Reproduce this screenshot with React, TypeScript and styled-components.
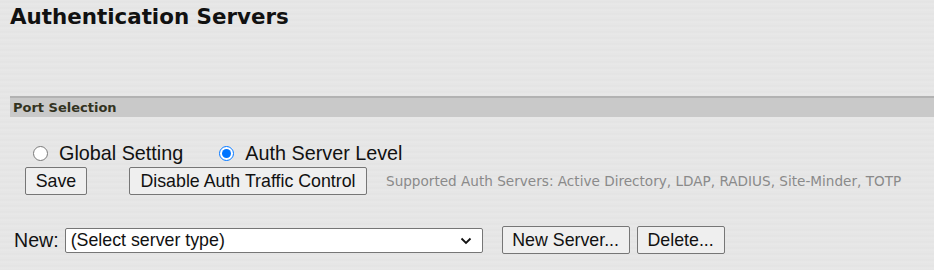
import React, { useState } from "react"
import styled, { createGlobalStyle } from "styled-components"

const GlobalStyle = createGlobalStyle`
  html, body {
    margin: 0;
    padding: 0;
    background: #e6e6e6;
  }
  body {
    font-family: "Liberation Sans", Arial, sans-serif;
  }
`

const Page = styled.div`
  width: 934px;
  height: 270px;
  overflow: hidden;
  background: repeating-linear-gradient(
    180deg,
    #e7e7e7 0px,
    #e3e3e3 2px,
    #e8e8e8 4px,
    #e5e5e5 6px
  );
`

const Title = styled.h1`
  margin: 0;
  padding: 4px 0 0 10px;
  height: 96px;
  box-sizing: border-box;
  font-family: "DejaVu Sans", Verdana, sans-serif;
  font-size: 21.4px;
  line-height: 26px;
  font-weight: bold;
  color: #111;
`

const SectionBar = styled.div`
  margin-left: 10px;
  height: 21px;
  box-sizing: border-box;
  border-top: 2px solid #b2b2b2;
  background: #c9c9c9;
  display: flex;
  align-items: center;
  padding-left: 3px;
  font-family: "DejaVu Sans", Verdana, sans-serif;
  font-size: 13px;
  font-weight: bold;
  color: #33331f;
`

const Body = styled.div`
  padding: 24px 0 0 0;
`

const RadioRow = styled.div`
  display: flex;
  align-items: center;
  padding-left: 33px;
  height: 24px;
`

const RadioLabel = styled.label`
  display: flex;
  align-items: center;
  font-size: 19.8px;
  color: #111;
  margin-right: 36px;

  input {
    width: 15px;
    height: 15px;
    margin: 0 11px 0 0;
    accent-color: #0075ff;
  }
`

const ButtonRow = styled.div`
  display: flex;
  align-items: center;
  padding-left: 25px;
  margin-top: 2px;
  gap: 42px;
`

const Button = styled.button<{ $width?: number }>`
  height: 28px;
  padding: 0 6px;
  font-family: "Liberation Sans", Arial, sans-serif;
  font-size: 17.8px;
  color: #111;
  background: #efefef;
  border: 1px solid #767676;
  border-radius: 2px;
  box-sizing: border-box;
  white-space: nowrap;
  width: ${(p) => (p.$width ? `${p.$width}px` : "auto")};
`

const Hint = styled.span`
  margin-left: -23px;
  font-family: "DejaVu Sans", Verdana, sans-serif;
  font-size: 13.6px;
  color: #8a8a8a;
  white-space: nowrap;
`

const NewRow = styled.div`
  display: flex;
  align-items: center;
  padding-left: 14px;
  margin-top: 31px;
  font-size: 19.6px;
  color: #111;
`

const NewLabel = styled.span`
  margin-right: 6px;
`

const SelectWrap = styled.div`
  position: relative;
  display: flex;
  margin-right: 19px;

  svg {
    position: absolute;
    right: 11px;
    top: 9px;
    pointer-events: none;
  }
`

const Select = styled.select`
  appearance: none;
  width: 418px;
  height: 25px;
  font-family: "Liberation Sans", Arial, sans-serif;
  font-size: 17.8px;
  color: #111;
  background: #fff;
  border: 1px solid #767676;
  border-radius: 2px;
  padding: 0 30px 0 5px;
`

const Buttons = styled.div`
  display: flex;
  gap: 7px;
`

export default function App() {
  const [mode, setMode] = useState("server")
  return (
    <>
      <GlobalStyle />
      <Page>
        <Title>Authentication Servers</Title>
        <SectionBar>Port Selection</SectionBar>
        <Body>
          <RadioRow>
            <RadioLabel>
              <input
                type="radio"
                name="mode"
                checked={mode === "global"}
                onChange={() => setMode("global")}
              />
              Global Setting
            </RadioLabel>
            <RadioLabel>
              <input
                type="radio"
                name="mode"
                checked={mode === "server"}
                onChange={() => setMode("server")}
              />
              Auth Server Level
            </RadioLabel>
          </RadioRow>
          <ButtonRow>
            <Button $width={62}>Save</Button>
            <Button $width={238}>Disable Auth Traffic Control</Button>
            <Hint>
              Supported Auth Servers: Active Directory, LDAP, RADIUS,
              Site-Minder, TOTP
            </Hint>
          </ButtonRow>
          <NewRow>
            <NewLabel>New:</NewLabel>
            <SelectWrap>
              <Select defaultValue="">
                <option value="">(Select server type)</option>
                <option value="ad">Active Directory</option>
                <option value="ldap">LDAP</option>
                <option value="radius">RADIUS</option>
                <option value="sm">Site-Minder</option>
                <option value="totp">TOTP</option>
              </Select>
              <svg width="12" height="8" viewBox="0 0 12 8">
                <path
                  d="M1.5 1.5 L6 6 L10.5 1.5"
                  fill="none"
                  stroke="#111"
                  strokeWidth="1.8"
                />
              </svg>
            </SelectWrap>
            <Buttons>
              <Button $width={128}>New Server...</Button>
              <Button $width={88}>Delete...</Button>
            </Buttons>
          </NewRow>
        </Body>
      </Page>
    </>
  )
}
